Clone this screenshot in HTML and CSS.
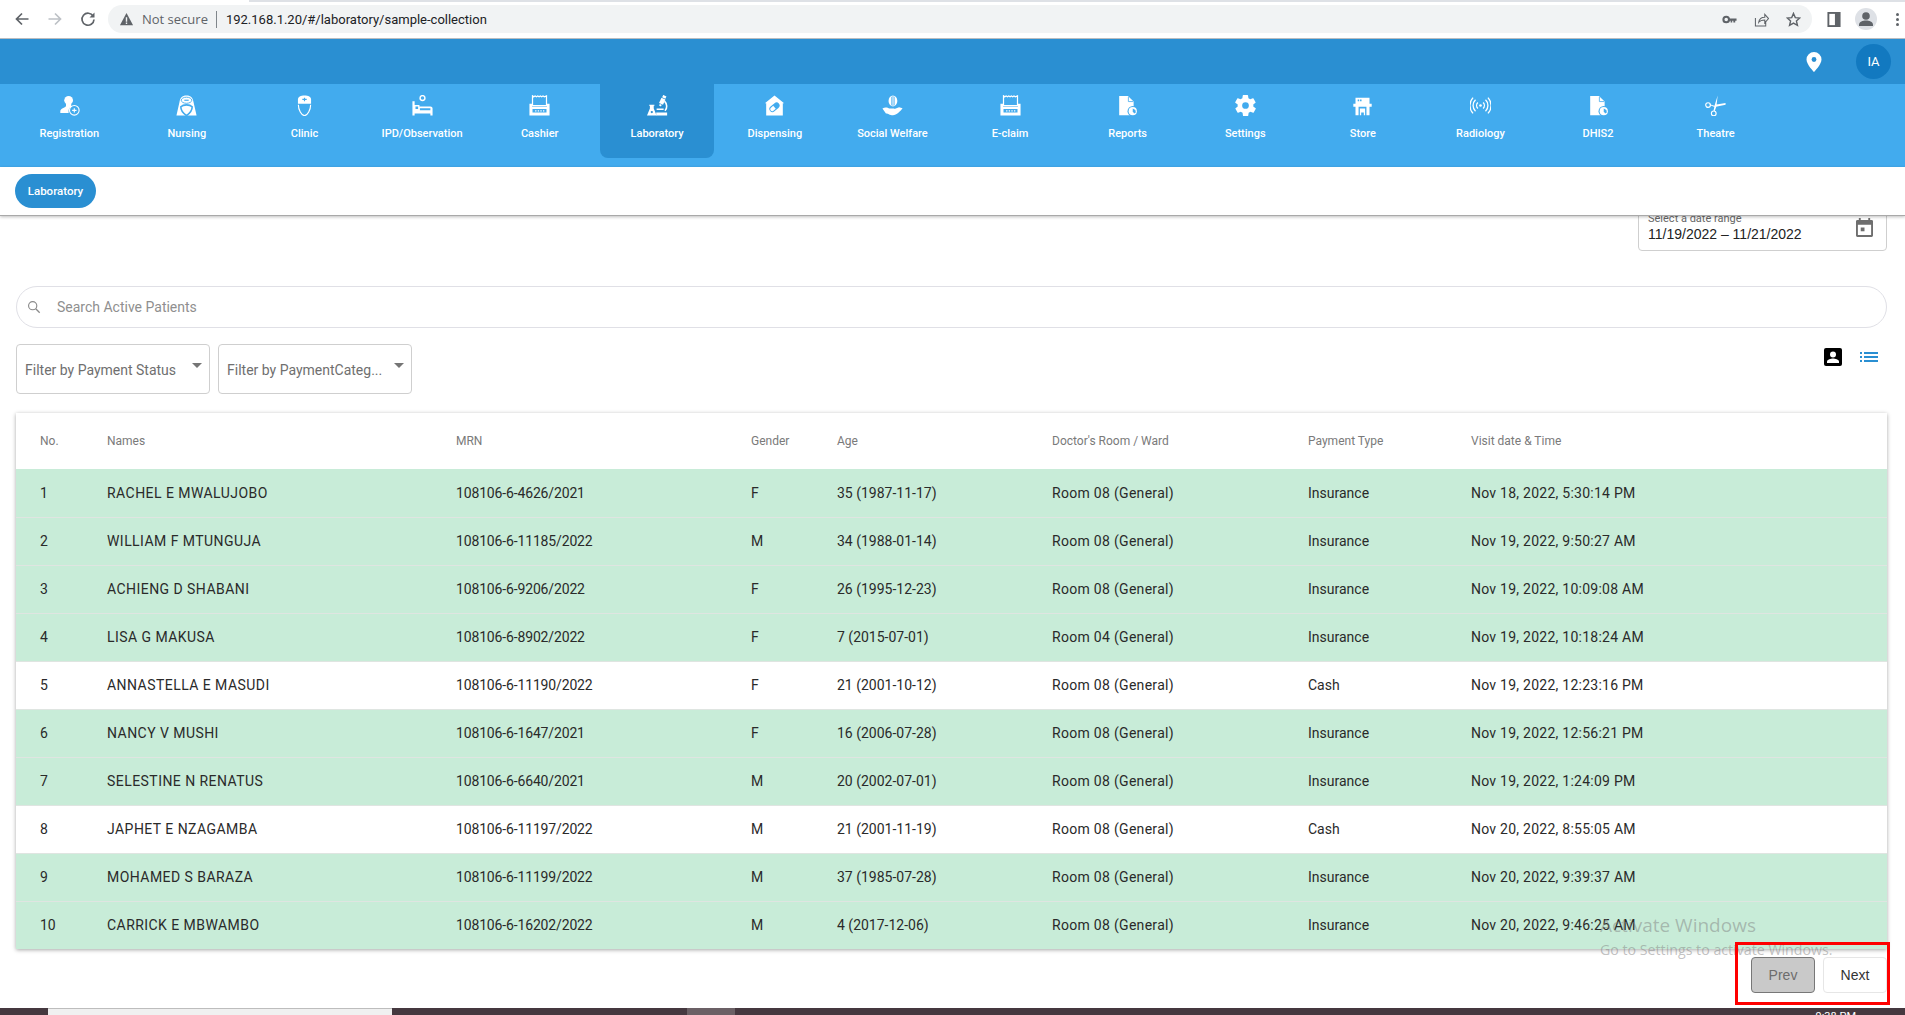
FILE: index.html
```html
<!DOCTYPE html>
<html lang="en">
<head>
<meta charset="utf-8">
<title>Laboratory</title>
<link rel="stylesheet" href="styles.css">
</head>
<body>
<div class="screen">
  <div class="tabstrip"><span class="tab-active"></span></div>
  <div class="toolbar">
    <svg class="tb-icon" viewBox="0 0 16 16"><path d="M14.500 8H3M8 2.500 2.500 8 8 13.500" fill="none" stroke="#5f6368" stroke-width="1.700"/></svg>
    <svg class="tb-icon" viewBox="0 0 16 16"><path d="M1.500 8H13M8 2.500 13.500 8 8 13.500" fill="none" stroke="#bdc1c6" stroke-width="1.700"/></svg>
    <svg class="tb-icon" viewBox="0 0 16 16"><path d="M13.200 5.200A6 6 0 1 0 14 8.500" fill="none" stroke="#5f6368" stroke-width="1.700"/><path d="M14.500 1.500v5h-5z" fill="#5f6368"/></svg>
    <div class="omnibox">
      <svg class="warn" viewBox="0 0 16 16"><path d="M8 1 15.500 15H.5z" fill="#5f6368"/><path d="M7.200 6h1.600v5H7.200zM7.200 12h1.600v1.600H7.200z" fill="#f1f3f4"/></svg>
      <span class="not-secure">Not secure</span>
      <span class="omni-sep"></span>
      <span class="url">192.168.1.20/#/laboratory/sample-collection</span>
      <span class="omni-actions">
        <svg class="tb-mini" viewBox="0 0 16 16"><circle cx="4.500" cy="8" r="3" fill="none" stroke="#5f6368" stroke-width="2.200"/><path d="M7 6.800h8.500v2.400h-1.400v2h-2v-2h-1.200v2H9.200v-2H7z" fill="#5f6368"/></svg>
        <svg class="tb-mini" viewBox="0 0 16 16"><path d="M1.500 6.500V15h11v-4M5 11c.5-4 3-5.500 6.500-5.500V2.500L15.500 7l-4 4.500V8.500C9 8.500 6.500 9 5 11z" fill="none" stroke="#5f6368" stroke-width="1.100"/></svg>
        <svg class="tb-mini" viewBox="0 0 16 16"><path d="M8 1.500 9.900 6l4.800.4-3.600 3.200 1.100 4.700L8 11.800l-4.200 2.500 1.100-4.700L1.300 6.400 6.100 6z" fill="none" stroke="#5f6368" stroke-width="1.500"/></svg>
      </span>
    </div>
    <svg class="panel-icon" viewBox="0 0 14 16"><path d="M0 0h14v16H0z" fill="#5f6368"/><path d="M2 2h6v12H2z" fill="#fff"/></svg>
    <span class="profile"><svg viewBox="0 0 22 22"><circle cx="11" cy="8" r="3.800" fill="#5f6368"/><path d="M4 17c0-3.500 4-4.500 7-4.500s7 1 7 4.500v1H4z" fill="#5f6368"/></svg></span>
    <span class="dots"><i></i><i></i><i></i></span>
  </div>

  <div class="appbar">
    <svg class="pin" viewBox="0 0 16 20"><path d="M8 0a7.500 7.500 0 0 0-7.500 7.500C.5 12.500 8 20 8 20s7.500-7.500 7.500-12.500A7.500 7.500 0 0 0 8 0z" fill="#fff"/><circle cx="8" cy="7.500" r="2.400" fill="#2a8fd2"/></svg>
    <span class="avatar">IA</span>
  </div>

  <nav class="modules">
    <a class="module"><svg viewBox="0 0 24 24"><circle cx="11" cy="6" r="5" fill="#fff"/><path d="M8 10h6v3.500c-2.500 1-3.500 3.500-3 7H1.500v-2C1.500 15 7 15 8 12.500z" fill="#fff"/><circle cx="17.500" cy="17.500" r="5.500" fill="none" stroke="#fff" stroke-width="1.300"/><path d="M15 17.500h5M17.500 15v5" stroke="#fff" stroke-width="1.300"/></svg><span>Registration</span></a>
    <a class="module"><svg viewBox="0 0 24 24"><path d="M12 .5C7 .5 4.500 3.500 4 8L.5 23.500h23L20 8C19.500 3.500 17 .5 12 .5z" fill="#fff"/><ellipse cx="12" cy="6" rx="6" ry="3.500" fill="#fff" stroke="#42abee" stroke-width="1"/><path d="M9.500 6h5" stroke="#42abee" stroke-width="1.300"/><path d="M5.500 13.500c3-3 10-3 13 0 0 4-3.500 8-6.500 10-3-2-6.500-6-6.500-10z" fill="#fff" stroke="#42abee" stroke-width="1.800"/></svg><span>Nursing</span></a>
    <a class="module"><svg viewBox="0 0 24 24"><path d="M4.500 10V5c0-2.800 3.200-4.500 7.500-4.500s7.500 1.700 7.500 4.500v5z" fill="#fff"/><path d="M5 11c0 6 3.500 12.500 7 12.500S19 17 19 11" fill="none" stroke="#fff" stroke-width="1.300"/><path d="M9.500 5h5M12 3v4" stroke="#42abee" stroke-width="1.300"/></svg><span>Clinic</span></a>
    <a class="module"><svg viewBox="0 0 24 24"><circle cx="12" cy="3.500" r="2.800" fill="none" stroke="#fff" stroke-width="1.600"/><path d="M.5 7v16.500h2.500V21h18v2.500h2.500V15.500c0-1.700-1-2.500-2.500-2.500H8.500v-1.500H3V7z" fill="#fff"/><path d="M4 13h3v3H4zM9 15h12v2.500H9z" fill="#42abee"/></svg><span>IPD/Observation</span></a>
    <a class="module"><svg viewBox="0 0 24 24"><path d="M4 1l1.500 1L7 1l1.500 1L10 1l1.500 1L13 1l1.500 1L16 1l1.500 1L20 1v11H4z" fill="none" stroke="#fff" stroke-width="1.400"/><path d="M.5 10h3v3h17v-3h3v13.500H.5z" fill="#fff"/><path d="M4 16h16v4H4z" fill="#42abee"/><path d="M7 17.300h1.500v1.500H7zM10 17.300h1.500v1.500H10zM13 17.300h1.500v1.500H13zM16 17.300h1.500v1.500H16z" fill="#fff"/></svg><span>Cashier</span></a>
    <a class="module is-active"><svg viewBox="0 0 24 24"><g transform="rotate(25 17 8)" fill="#fff"><rect x="15" y="0" width="4" height="3"/><rect x="14.500" y="3.800" width="5" height="6.500"/><rect x="15.800" y="11" width="2.400" height="2"/></g><path d="M20 7c3 3 3.500 8 .5 11" fill="none" stroke="#fff" stroke-width="1.800"/><path d="M11 15.500h8v1.600h-8zM10.500 20H23v3.500H10.500z" fill="#fff"/><path d="M2.500 11h6v1.200h-.8v3.300L11 23.500H0l3.300-8v-3.300h-.8z" fill="#fff"/><circle cx="5.500" cy="19.500" r="1.300" fill="#2a8fd2"/></svg><span>Laboratory</span></a>
    <a class="module"><svg viewBox="0 0 24 24"><path d="M12 .5 23 9.500h-1.500v14h-19v-14H1z" fill="#fff"/><g transform="rotate(50 12 14)"><rect x="8.500" y="7.500" width="7" height="13" rx="3.500" fill="#42abee"/><path d="M9.800 14h4.400v3.500a2.200 2.200 0 0 1-4.400 0z" fill="#fff"/></g></svg><span>Dispensing</span></a>
    <a class="module"><svg viewBox="0 0 24 24"><ellipse cx="12.500" cy="6.800" rx="5" ry="6.300" fill="#fff"/><path d="M11 2v10M12.500 1v12M14 2v10" stroke="#42abee" stroke-width=".8"/><path d="M.5 15.500c3-2 6-1 8 0h5c1.500 0 1.500 2 0 2h-3l9-3.500 4 1c-2 3-7 8-11 8-4 0-5-2-8-2z" fill="#fff"/></svg><span>Social Welfare</span></a>
    <a class="module"><svg viewBox="0 0 24 24"><path d="M4 1l1.500 1L7 1l1.500 1L10 1l1.500 1L13 1l1.500 1L16 1l1.500 1L20 1v11H4z" fill="none" stroke="#fff" stroke-width="1.400"/><path d="M.5 10h3v3h17v-3h3v13.500H.5z" fill="#fff"/><path d="M4 16h16v4H4z" fill="#42abee"/><path d="M7 17.300h1.500v1.500H7zM10 17.300h1.500v1.500H10zM13 17.300h1.500v1.500H13zM16 17.300h1.500v1.500H16z" fill="#fff"/></svg><span>E-claim</span></a>
    <a class="module"><svg viewBox="0 0 24 24"><path d="M2.500 1h10l6.500 6.500V23H2.500z" fill="#fff"/><path d="M13 2v5.500h5.500" fill="none" stroke="#42abee" stroke-width=".9"/><circle cx="18" cy="18.500" r="6" fill="#42abee"/><circle cx="18" cy="18.500" r="4.700" fill="#fff"/><path d="M18 18.500v-3l3 1.500.5 3-2 1z" fill="#42abee"/></svg><span>Reports</span></a>
    <a class="module"><svg viewBox="2 2 20 20"><path fill="#fff" d="M19.400 13c0-.3.100-.7.100-1s0-.7-.1-1l2.100-1.600c.2-.1.2-.4.100-.6l-2-3.500c-.1-.2-.4-.3-.6-.2l-2.500 1c-.5-.4-1.100-.7-1.700-1l-.4-2.600c0-.3-.2-.5-.5-.5h-4c-.3 0-.5.200-.5.500l-.4 2.600c-.6.300-1.200.6-1.700 1l-2.500-1c-.2-.1-.5 0-.6.200l-2 3.500c-.1.200-.1.500.1.600L4.600 11c0 .3-.1.700-.1 1s0 .7.100 1l-2.100 1.600c-.2.100-.2.400-.1.600l2 3.500c.1.200.4.300.6.200l2.500-1c.5.400 1.100.7 1.700 1l.4 2.600c0 .3.200.5.500.5h4c.3 0 .5-.2.500-.5l.4-2.600c.6-.3 1.200-.6 1.700-1l2.500 1c.2.100.5 0 .6-.2l2-3.500c.1-.2.100-.5-.1-.6zM12 15.200a3.200 3.200 0 1 1 0-6.400 3.200 3.200 0 0 1 0 6.400z"/></svg><span>Settings</span></a>
    <a class="module"><svg viewBox="0 0 24 24"><path d="M4 3h16v7H4zM1.500 10h21v3.500h-21zM4 13.500h3.500V23H4zM16.500 13.500H20V23h-3.500zM9 15.500h6V23h-1.500v-3h-3v3H9z" fill="#fff"/><path d="M6.500 5h1.700v2H6.500zM9.200 5h1.700v2H9.200z" fill="#42abee"/></svg><span>Store</span></a>
    <a class="module"><svg viewBox="0 0 24 24" fill="none" stroke="#fff"><circle cx="12" cy="12" r="1.500" fill="#fff" stroke="none"/><path d="M9 8.500a5 5 0 0 0 0 7M15 8.500a5 5 0 0 1 0 7M6.300 5.500a9 9 0 0 0 0 13M17.700 5.500a9 9 0 0 1 0 13M3.500 3a13 13 0 0 0 0 18M20.500 3a13 13 0 0 1 0 18" stroke-width="1.500"/></svg><span>Radiology</span></a>
    <a class="module"><svg viewBox="0 0 24 24"><path d="M2.500 1h10l6.500 6.500V23H2.500z" fill="#fff"/><path d="M13 2v5.500h5.500" fill="none" stroke="#42abee" stroke-width=".9"/><circle cx="18" cy="18.500" r="6" fill="#42abee"/><circle cx="18" cy="18.500" r="4.700" fill="#fff"/><path d="M18 18.500v-3l3 1.500.5 3-2 1z" fill="#42abee"/></svg><span>DHIS2</span></a>
    <a class="module"><svg viewBox="0 0 24 24"><path d="M14.500 .5 13 13l-2 5.500-1.300-.5 1.500-7zM11.500 11l12-1.800v1.800L12.500 13.500zM5.500 10.500l6 2-.4 1.200-6-2.200z" fill="#fff"/><g fill="none" stroke="#fff" stroke-width="1.300"><circle cx="3.500" cy="11.500" r="2.700"/><circle cx="10" cy="21" r="2.700"/></g></svg><span>Theatre</span></a>
  </nav>

  <header class="subnav"><a class="pill">Laboratory</a></header>

  <main class="content">
    <div class="date-row">
      <div class="date-field">
        <div class="date-text">
          <span class="date-label">Select a date range</span>
          <span class="date-value">11/19/2022 – 11/21/2022</span>
        </div>
        <svg class="cal" viewBox="0 0 18 20"><path d="M3 0h2v2h8V0h2v2h1.500A1.500 1.500 0 0 1 18 3.500v15a1.500 1.500 0 0 1-1.500 1.500h-15A1.500 1.500 0 0 1 0 18.500v-15A1.500 1.500 0 0 1 1.500 2H3zM2 7v11h14V7z" fill="#6e6e6e"/><path d="M5 10h4v4H5z" fill="#6e6e6e"/></svg>
      </div>
    </div>

    <div class="search">
      <svg class="search-icon" viewBox="0 0 16 16"><circle cx="6.500" cy="6.500" r="4.700" fill="none" stroke="#8a8a8a" stroke-width="1.300"/><path d="M10 10l4.500 4.500" stroke="#8a8a8a" stroke-width="1.500"/></svg>
      <span>Search Active Patients</span>
    </div>

    <div class="filter-row">
      <div class="select"><span>Filter by Payment Status</span><i class="caret"></i></div>
      <div class="select"><span>Filter by PaymentCateg...</span><i class="caret"></i></div>
      <div class="view-toggle">
        <svg class="view-card" viewBox="0 0 18 18"><rect width="18" height="18" rx="2" fill="#000"/><circle cx="9" cy="6.500" r="3" fill="#fff"/><path d="M3 15v-1.500c0-2 4-3 6-3s6 1 6 3V15z" fill="#fff"/></svg>
        <svg class="view-list" viewBox="0 0 18 10"><path d="M0 0h2v2H0zM4 0h14v2H4zM0 4h2v2H0zM4 4h14v2H4zM0 8h2v2H0zM4 8h14v2H4z" fill="#2a8fd2"/></svg>
      </div>
    </div>

    <table class="patients">
      <thead>
        <tr><th class="c-no">No.</th><th class="c-name">Names</th><th class="c-mrn">MRN</th><th class="c-gen">Gender</th><th class="c-age">Age</th><th class="c-room">Doctor's Room / Ward</th><th class="c-pay">Payment Type</th><th>Visit date &amp; Time</th></tr>
      </thead>
      <tbody>
        <tr class="paid"><td>1</td><td>RACHEL E MWALUJOBO</td><td>108106-6-4626/2021</td><td>F</td><td>35 (1987-11-17)</td><td>Room 08 (General)</td><td>Insurance</td><td>Nov 18, 2022, 5:30:14 PM</td></tr>
        <tr class="paid"><td>2</td><td>WILLIAM F MTUNGUJA</td><td>108106-6-11185/2022</td><td>M</td><td>34 (1988-01-14)</td><td>Room 08 (General)</td><td>Insurance</td><td>Nov 19, 2022, 9:50:27 AM</td></tr>
        <tr class="paid"><td>3</td><td>ACHIENG D SHABANI</td><td>108106-6-9206/2022</td><td>F</td><td>26 (1995-12-23)</td><td>Room 08 (General)</td><td>Insurance</td><td>Nov 19, 2022, 10:09:08 AM</td></tr>
        <tr class="paid"><td>4</td><td>LISA G MAKUSA</td><td>108106-6-8902/2022</td><td>F</td><td>7 (2015-07-01)</td><td>Room 04 (General)</td><td>Insurance</td><td>Nov 19, 2022, 10:18:24 AM</td></tr>
        <tr><td>5</td><td>ANNASTELLA E MASUDI</td><td>108106-6-11190/2022</td><td>F</td><td>21 (2001-10-12)</td><td>Room 08 (General)</td><td>Cash</td><td>Nov 19, 2022, 12:23:16 PM</td></tr>
        <tr class="paid"><td>6</td><td>NANCY V MUSHI</td><td>108106-6-1647/2021</td><td>F</td><td>16 (2006-07-28)</td><td>Room 08 (General)</td><td>Insurance</td><td>Nov 19, 2022, 12:56:21 PM</td></tr>
        <tr class="paid"><td>7</td><td>SELESTINE N RENATUS</td><td>108106-6-6640/2021</td><td>M</td><td>20 (2002-07-01)</td><td>Room 08 (General)</td><td>Insurance</td><td>Nov 19, 2022, 1:24:09 PM</td></tr>
        <tr><td>8</td><td>JAPHET E NZAGAMBA</td><td>108106-6-11197/2022</td><td>M</td><td>21 (2001-11-19)</td><td>Room 08 (General)</td><td>Cash</td><td>Nov 20, 2022, 8:55:05 AM</td></tr>
        <tr class="paid"><td>9</td><td>MOHAMED S BARAZA</td><td>108106-6-11199/2022</td><td>M</td><td>37 (1985-07-28)</td><td>Room 08 (General)</td><td>Insurance</td><td>Nov 20, 2022, 9:39:37 AM</td></tr>
        <tr class="paid"><td>10</td><td>CARRICK E MBWAMBO</td><td>108106-6-16202/2022</td><td>M</td><td>4 (2017-12-06)</td><td>Room 08 (General)</td><td>Insurance</td><td>Nov 20, 2022, 9:46:25 AM</td></tr>
      </tbody>
    </table>

    <div class="pager">
      <button class="page-btn is-disabled">Prev</button>
      <button class="page-btn">Next</button>
    </div>
  </main>

  <div class="watermark">
    <span class="wm-title">Activate Windows</span>
    <span class="wm-sub">Go to Settings to activate Windows.</span>
  </div>
  <div class="annotation"></div>

  <footer class="taskbar">
    <span class="task-search"></span>
    <span class="task-app"></span>
    <span class="task-clock">9:38 PM</span>
  </footer>
</div>
</body>
</html>
```

FILE: styles.css
```css
* { box-sizing: border-box; }
html, body { margin: 0; padding: 0; height: 100%; overflow: hidden; background: #fff; }
body { font-family: Roboto, "Liberation Sans", sans-serif; color: #333; }

.screen { position: relative; width: 1905px; height: 1015px; display: flex; flex-direction: column; overflow: hidden; }

/* browser chrome */
.tabstrip { height: 2px; background: #dee1e6; flex: none; }
.tab-active { display: block; width: 249px; height: 2px; background: #fff; }
.toolbar { flex: none; height: 37px; display: flex; align-items: center; background: #fff; border-bottom: 1px solid #b9bcc0; padding: 0 0 2px 14px; }
.tb-icon { width: 16px; height: 16px; margin-right: 17px; flex: none; }
.omnibox { width: 1704px; height: 28px; margin-left: -5px; border-radius: 14px; background: #f1f3f4; display: flex; align-items: center; padding: 0 11px; }
.warn { width: 15px; height: 14px; margin-right: 8px; flex: none; }
.not-secure { color: #5f6368; font-family: "Open Sans", sans-serif; font-size: 13px; }
.omni-sep { width: 1px; height: 17px; background: #80868b; margin: 0 9px 0 8px; }
.url { color: #202124; font-size: 13px; }
.omni-actions { margin-left: auto; display: flex; gap: 17px; align-items: center; }
.tb-mini { width: 15px; height: 15px; }
.panel-icon { width: 14px; height: 15px; margin-left: 15px; flex: none; }
.profile { width: 22px; height: 22px; border-radius: 50%; background: #dee1e6; margin-left: 14px; flex: none; display: flex; }
.dots { margin-left: 19px; display: flex; flex-direction: column; gap: 2px; }
.dots i { display: block; width: 3px; height: 3px; border-radius: 50%; background: #5f6368; }

/* app bar */
.appbar { flex: none; height: 45px; background: #2a8fd2; display: flex; align-items: center; justify-content: flex-end; padding-right: 14px; }
.pin { width: 16px; height: 20px; margin-right: 34px; }
.avatar { width: 35px; height: 35px; border-radius: 50%; background: #1279c0; color: #fff; font-size: 13px; display: flex; align-items: center; justify-content: center; }

/* modules */
.modules { flex: none; height: 83px; background: #42abee; display: flex; padding-left: 10.5px; }
.module { width: 117.6px; height: 74px; padding-top: 11px; display: flex; flex-direction: column; align-items: center; color: #fff; font-size: 11px; font-weight: 500; border-radius: 0 0 8px 8px; }
.module svg { width: 21px; height: 21px; flex: none; margin-bottom: 11px; }
.module.is-active { background: #2a8fd2; width: 114px; margin: 0 2px 0 1.6px; }

/* sub nav */
.subnav { flex: none; height: 49px; background: #fff; border-bottom: 1px solid #a9a9a9; box-shadow: 0 1px 3px rgba(0,0,0,.25); padding: 7px 15px 0; position: relative; z-index: 2; }
.pill { display: flex; width: 81px; height: 34px; border-radius: 17px; background: #2a8fd2; color: #fff; font-size: 11.5px; font-weight: 500; align-items: center; justify-content: center; }

/* content */
.content { flex: 1; min-height: 0; padding: 0 18px 0 16px; position: relative; overflow: hidden; }
.date-row { display: flex; justify-content: flex-end; height: 36px; }
.date-field { width: 249px; height: 45px; margin-top: -10px; flex: none; border: 1px solid #cfcfcf; border-radius: 4px; display: flex; justify-content: space-between; align-items: flex-start; padding: 6px 13px 0 9px; }
.date-text { display: flex; flex-direction: column; }
.date-label { font-size: 11px; line-height: 11px; color: #666; }
.date-value { font-family: "Liberation Sans", sans-serif; font-size: 14px; line-height: 18px; margin-top: 1px; color: #222; }
.cal { width: 17px; height: 19px; margin-top: 5px; }

.search { height: 42px; margin-top: 34px; border: 1px solid #e0e0e6; border-radius: 21px; display: flex; align-items: center; padding-left: 10px; font-size: 14px; color: #8f8f8f; }
.search-icon { width: 14px; height: 14px; margin-right: 16px; }

.filter-row { display: flex; gap: 8px; margin-top: 16px; align-items: flex-start; }
.select { width: 194px; height: 50px; border: 1px solid #cfcfcf; border-radius: 4px; display: flex; justify-content: space-between; align-items: center; padding: 2px 7px 0 8px; font-size: 14px; color: #6f6f6f; white-space: nowrap; }
.caret { width: 0; height: 0; border-left: 5px solid transparent; border-right: 5px solid transparent; border-top: 5px solid #757575; margin-top: -10px; }
.view-toggle { margin-left: auto; display: flex; align-items: center; gap: 18px; padding: 4px 9px 0 0; }
.view-card { width: 18px; height: 18px; }
.view-list { width: 18px; height: 10px; }

.patients { width: 100%; margin-top: 19px; border-collapse: collapse; table-layout: fixed; box-shadow: 0 1px 4px rgba(0,0,0,.35); font-size: 14px; }
.patients th { height: 56px; font-weight: 400; font-size: 12px; color: #7a7a7a; text-align: left; padding: 0 0 0 24px; }
.patients td { height: 48px; padding: 0 0 0 24px; color: #2a2a2a; border-top: 1px solid #dfe5e1; white-space: nowrap; }
.patients td:nth-child(2) { letter-spacing: .45px; }
.patients td:nth-child(3) { letter-spacing: -.15px; }
.patients td:nth-child(6) { letter-spacing: .3px; }
.patients td:nth-child(8) { letter-spacing: .25px; }
.patients tbody tr:first-child td { border-top: 0; }
.paid { background: #c8ecd8; }
.c-no { width: 67px; }
.c-name { width: 349px; }
.c-mrn { width: 295px; }
.c-gen { width: 86px; }
.c-age { width: 215px; }
.c-room { width: 256px; }
.c-pay { width: 163px; }

.pager { display: flex; justify-content: flex-end; gap: 8px; margin-top: 8px; }
.page-btn { width: 64px; height: 36px; border: 1px solid #e6e6e6; border-radius: 4px; background: #fff; color: #333; font: 14px "Liberation Sans", sans-serif; padding: 0; }
.page-btn.is-disabled { background: #c9c9c9; border-color: #777; color: #6d6d6d; }

/* overlays */
.watermark { position: absolute; left: 1600px; top: 912px; display: flex; flex-direction: column; font-family: "Open Sans", sans-serif; color: rgba(120,120,120,.45); pointer-events: none; z-index: 3; }
.wm-title { font-size: 19px; line-height: 27px; }
.wm-sub { font-size: 14.2px; line-height: 19px; margin-top: 1px; }
.annotation { position: absolute; left: 1735px; top: 942px; width: 155px; height: 63px; border: 3px solid #f00; z-index: 4; }

/* taskbar */
.taskbar { flex: none; height: 7px; background: #45383f; display: flex; overflow: hidden; padding-left: 48px; position: relative; }
.task-search { width: 344px; background: #f0f0f0; border-top: 1px solid #bdbdbd; }
.task-app { width: 48px; margin-left: 295px; background: #6b6065; }
.task-clock { margin: 2px 49px 0 auto; color: #fff; font-size: 11px; line-height: 13px; }
```
